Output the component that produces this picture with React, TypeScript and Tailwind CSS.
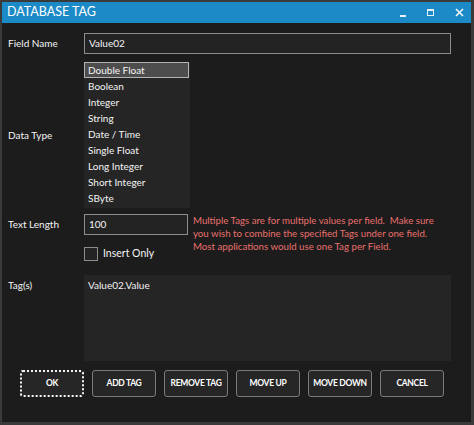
import React from "react";

const items = [
  "Double Float",
  "Boolean",
  "Integer",
  "String",
  "Date / Time",
  "Single Float",
  "Long Integer",
  "Short Integer",
  "SByte",
];

const buttons = ["OK", "ADD TAG", "REMOVE TAG", "MOVE UP", "MOVE DOWN", "CANCEL"];

export default function App() {
  return (
    <div
      className="w-[474px] h-[425px] bg-[#3a3a3a] pt-[2px] pl-[2px] pr-[3px] pb-[3px]"
      style={{ fontFamily: 'Lato, "Noto Sans", sans-serif' }}
    >
      <div className="flex flex-col h-full bg-[#1c1c1c] text-[#f4f4f4]">
        {/* Title bar */}
        <div className="flex items-center h-[21px] bg-[#1c8ac6] pl-[5px] pr-[6px] shrink-0">
          <span className="text-[12.5px] leading-none text-white">DATABASE TAG</span>
          <div className="ml-auto flex items-center">
            <svg width="7" height="10" viewBox="0 0 7 10" className="mr-[20px]">
              <rect x="0" y="7" width="6" height="2" fill="#e6f2fa" />
            </svg>
            <svg width="7" height="8" viewBox="0 0 7 8" className="mr-[21px]">
              <rect x="0.5" y="0.5" width="6" height="6" fill="none" stroke="#e6f2fa" strokeWidth="1" />
              <rect x="0.5" y="0.5" width="6" height="1.5" fill="#e6f2fa" />
            </svg>
            <svg width="9" height="9" viewBox="0 0 9 9" className="mr-[1px]">
              <path d="M1 1 L8 8 M8 1 L1 8" stroke="#f2f8fc" strokeWidth="1.6" />
            </svg>
          </div>
        </div>

        {/* Body */}
        <div className="flex flex-col pl-[6px] pr-[20px] text-[10px]">
          {/* Field name */}
          <div className="flex items-center mt-[10px] h-[21px]">
            <div className="w-[76px] shrink-0">Field Name</div>
            <div className="flex-1 h-full flex items-center border border-[#8c8c8c] bg-[#232323] pl-[4px]">
              Value02
            </div>
          </div>

          {/* Data type */}
          <div className="flex items-center mt-[8px]">
            <div className="w-[76px] shrink-0">Data Type</div>
            <div className="w-[106px] h-[146px] bg-[#252525] flex flex-col">
              {items.map((it, i) => (
                <div
                  key={it}
                  className={
                    i === 0
                      ? "h-[16px] flex items-center pl-[3px] bg-[#4d4d4d] border border-[#b4b4b4] mr-[1px]"
                      : "h-[16px] flex items-center pl-[4px]"
                  }
                >
                  {it}
                </div>
              ))}
            </div>
          </div>

          {/* Text length */}
          <div className="flex mt-[6px]">
            <div className="w-[76px] shrink-0 h-[21px] flex items-center">Text Length</div>
            <div className="flex flex-col shrink-0">
              <div className="w-[104px] h-[21px] flex items-center border border-[#8c8c8c] bg-[#232323] pl-[4px]">
                100
              </div>
              <div className="flex items-center mt-[12px] h-[14px]">
                <div className="w-[14px] h-[14px] border border-[#8c8c8c] bg-[#232323]" />
                <span className="ml-[5px] text-[10.5px]">Insert Only</span>
              </div>
            </div>
            <div className="ml-[5px] text-[#e8706e] text-[9.7px] leading-[13px] whitespace-nowrap">
              Multiple Tags are for multiple values per field.&nbsp; Make sure
              <br />
              you wish to combine the specified Tags under one field.
              <br />
              Most applications would use one Tag per Field.
            </div>
          </div>

          {/* Tags */}
          <div className="flex mt-[14px]">
            <div className="w-[76px] shrink-0 pt-[3px]">Tag(s)</div>
            <div className="flex-1 h-[86px] bg-[#252525] pl-[4px] pt-[3px]">Value02.Value</div>
          </div>
        </div>

        {/* Buttons */}
        <div className="flex gap-[8px] pl-[18px] mt-[9px]">
          {buttons.map((b, i) => (
            <div
              key={b}
              className={
                i === 0
                  ? "w-[64px] h-[27px] flex items-center justify-center rounded-[3px] border-2 border-dotted border-[#f4f4f4] bg-[#262626] text-[8.5px] font-bold text-white whitespace-nowrap tracking-[-0.3px]"
                  : "w-[64px] h-[27px] flex items-center justify-center rounded-[3px] border border-[#7a7a7a] bg-[#262626] text-[8.5px] font-bold text-white whitespace-nowrap tracking-[-0.3px]"
              }
            >
              {b}
            </div>
          ))}
        </div>
      </div>
    </div>
  );
}
